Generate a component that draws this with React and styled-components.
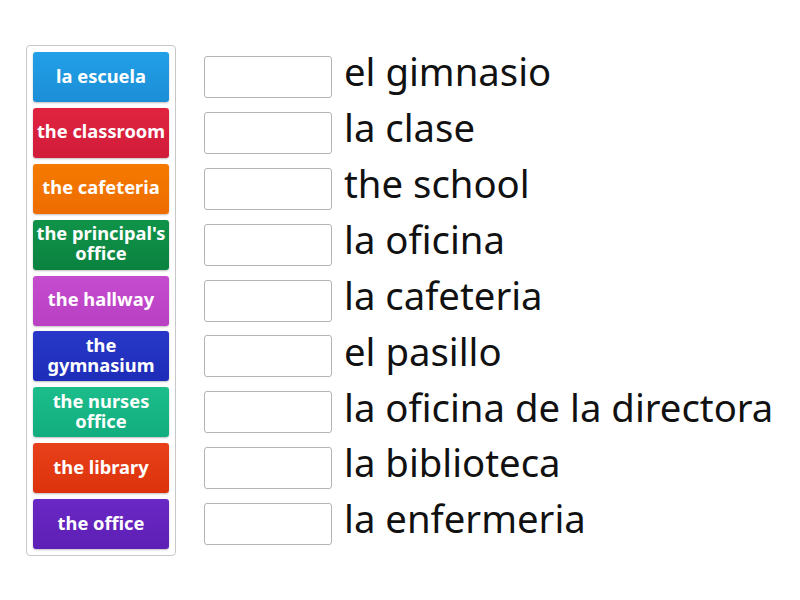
import React from "react";
import styled, { createGlobalStyle } from "styled-components";

const Global = createGlobalStyle`
  html, body { margin: 0; padding: 0; background: #fff; }
  body { font-family: "Noto Sans", "Open Sans", sans-serif; }
`;

const Page = styled.div`
  width: 800px;
  height: 600px;
  box-sizing: border-box;
  padding: 45px 0 0 26px;
  display: flex;
  align-items: flex-start;
  gap: 28px;
`;

const Panel = styled.div`
  width: 150px;
  box-sizing: border-box;
  border: 1px solid #c8c8c8;
  border-radius: 4px;
  padding: 6px;
  display: flex;
  flex-direction: column;
  gap: 5.875px;
`;

const Card = styled.div`
  height: 50px;
  box-sizing: border-box;
  border-radius: 3px;
  background: linear-gradient(180deg, ${(p) => p.$top} 0%, ${(p) => p.$bottom} 100%);
  color: #fff;
  font-weight: 700;
  font-size: 18.3px;
  line-height: 20px;
  text-align: center;
  display: flex;
  align-items: center;
  justify-content: center;
  padding: 0 1px 3px;
  box-shadow: 0 1px 2px rgba(0, 0, 0, 0.25);
`;

const Targets = styled.div`
  padding-top: 7px;
  display: flex;
  flex-direction: column;
  gap: 5.875px;
`;

const Row = styled.div`
  height: 50px;
  display: flex;
  align-items: center;
  gap: 12px;
`;

const Slot = styled.div`
  width: 128px;
  height: 42px;
  box-sizing: border-box;
  border: 1px solid #b4b4b4;
  border-radius: 3px;
  background: #fff;
  flex: none;
`;

const Label = styled.div`
  font-size: 38.3px;
  color: #111;
  white-space: nowrap;
  line-height: 1;
  margin-top: -11px;
`;

const cards = [
  ["la escuela", "#22a0e8", "#1b8ed6"],
  ["the classroom", "#e0243f", "#d01c3a"],
  ["the cafeteria", "#f57a00", "#ee6c00"],
  ["the principal's office", "#109349", "#0b8240"],
  ["the hallway", "#c64ccf", "#b93fc3"],
  ["the gymnasium", "#2838c8", "#1e2db8"],
  ["the nurses office", "#1cbd8b", "#12ad7e"],
  ["the library", "#e8401a", "#dc330c"],
  ["the office", "#6a28c4", "#5d1fb5"],
];

const words = [
  "el gimnasio",
  "la clase",
  "the school",
  "la oficina",
  "la cafeteria",
  "el pasillo",
  "la oficina de la directora",
  "la biblioteca",
  "la enfermeria",
];

export default function App() {
  return (
    <>
      <Global />
      <Page>
        <Panel>
          {cards.map(([t, a, b]) => (
            <Card key={t} $top={a} $bottom={b}>
              {t}
            </Card>
          ))}
        </Panel>
        <Targets>
          {words.map((w) => (
            <Row key={w}>
              <Slot />
              <Label>{w}</Label>
            </Row>
          ))}
        </Targets>
      </Page>
    </>
  );
}
